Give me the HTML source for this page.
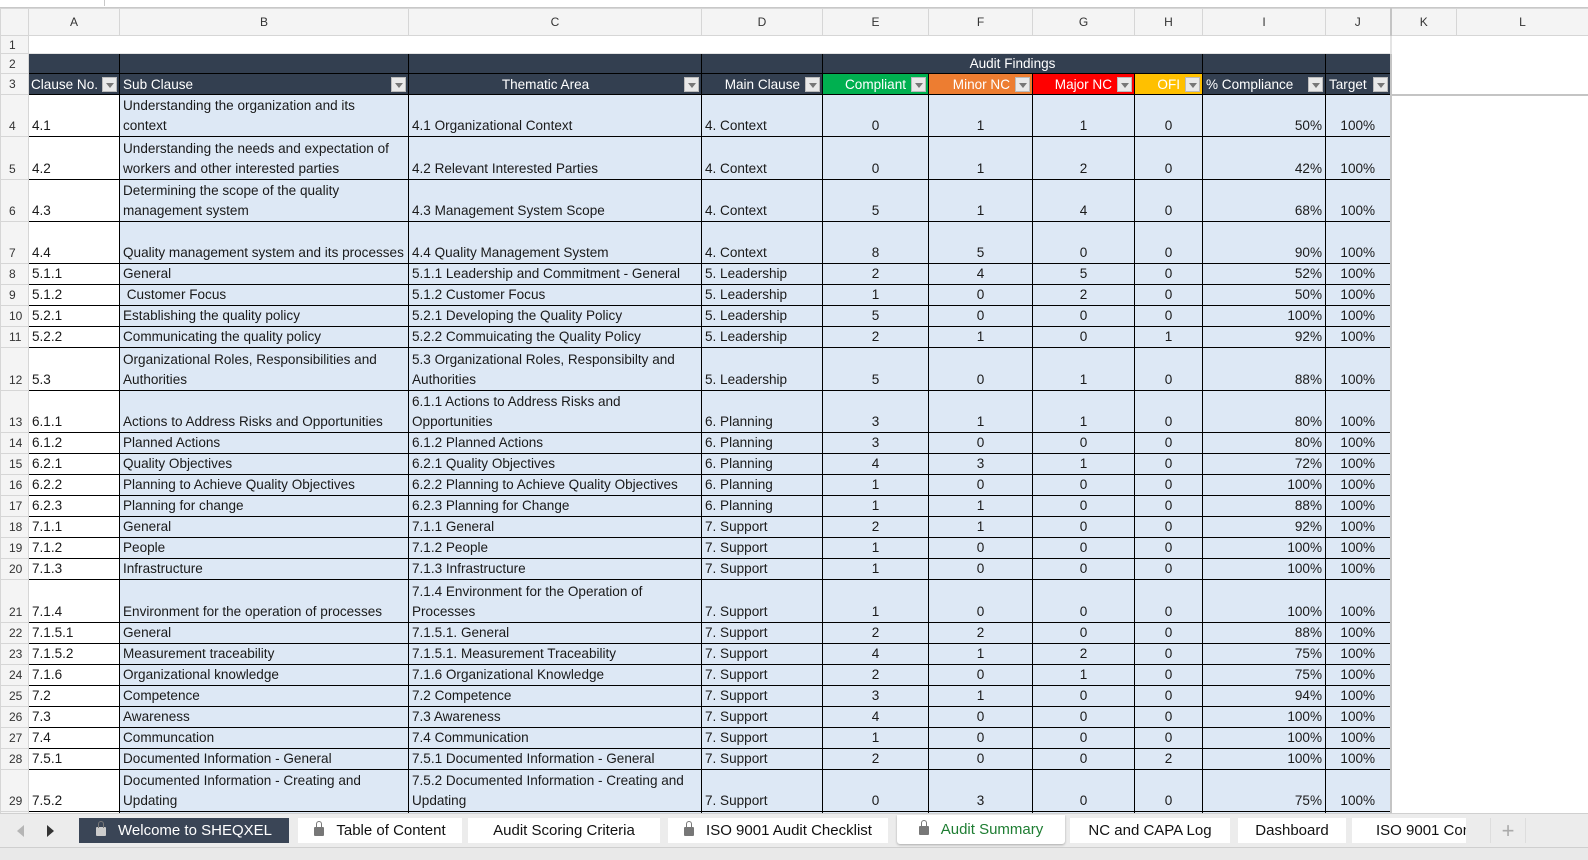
<!DOCTYPE html>
<html><head><meta charset="utf-8">
<style>
*{margin:0;padding:0;box-sizing:border-box}
body{width:1588px;height:860px;overflow:hidden;background:#fff;font-family:"Liberation Sans",Arial,sans-serif;position:relative}
#top{position:absolute;left:0;top:0;width:1588px;height:8px;background:#fff;border-bottom:1px solid #c8c8c8}
#top div{position:absolute;left:104px;top:0;width:1px;height:6px;background:#c8c8c8}
#wrap{position:absolute;left:0;top:8px;width:1588px;height:805px;overflow:hidden}
table{border-collapse:collapse;table-layout:fixed;width:1588px;font-size:13.55px;color:#1a1a1a}
td{border:1px solid #000;padding:0 3px;vertical-align:bottom;line-height:20px;white-space:nowrap;overflow:hidden;height:21.05px}
tr.d td{height:42.3px;white-space:normal}
td.n{background:#f4f4f4;border:1px solid #d6d6d6;text-align:left;padding-left:8px;color:#333;font-size:12px}
tr.h td{background:#f4f4f4;border:1px solid #d6d6d6;text-align:center;vertical-align:middle;color:#333;font-size:12px;height:27px}
td.a{background:#fff}
td.b{background:#dde8f5}
td.c{text-align:center}
td.r{text-align:right}
td.k{border:none;background:#fff}
td.kl{border:none;border-left:2px solid #c4c4c4;background:#fff}
tr.r1 td{height:18px;line-height:16px;border-color:#e4e4e4}
tr.r1 td.n{border-color:#d6d6d6}
.dk{background:#333f50!important;color:#fff}
tr.r2 td{height:20px;line-height:18px}
tr.r3 td{height:21px;line-height:19px;position:relative;color:#fff;font-size:13.55px}
.f{position:absolute;right:2px;top:3px;width:15px;height:15px;background:#e9e9e9;border:1px solid #bbb}
.f:after{content:"";position:absolute;left:3px;top:5px;border-left:4px solid transparent;border-right:4px solid transparent;border-top:5px solid #777}
.fl{padding-right:22px!important}
#tabs{position:absolute;left:0;top:813px;width:1588px;height:35px;background:#ececec;border-top:1px solid #d0d0d0;border-bottom:1px solid #cfcfcf}
#bot{position:absolute;left:0;top:848px;width:1588px;height:12px;background:#e9e9e9}
.t{position:absolute;top:4px;height:25px;background:#fff;font-size:15px;line-height:25px;text-align:center;color:#111}
.lk{display:inline-block;width:10px;height:9px;background:#777;border-radius:1px;position:relative;margin-right:12px;vertical-align:-1px}
.lk:before{content:"";position:absolute;left:2px;top:-6px;width:4px;height:6px;border:1.5px solid #777;border-bottom:none;border-radius:4px 4px 0 0}
.ar{position:absolute;top:11px;width:0;height:0;border-top:6px solid transparent;border-bottom:6px solid transparent}
</style></head><body>
<div id="top"><div></div></div>
<div id="wrap">
<table>
<colgroup><col style="width:28px"><col style="width:91px"><col style="width:289px"><col style="width:293px"><col style="width:121px"><col style="width:106px"><col style="width:104px"><col style="width:102px"><col style="width:68px"><col style="width:123px"><col style="width:65px"><col style="width:66px"><col style="width:132px"></colgroup>
<tr class="h"><td></td><td>A</td><td>B</td><td>C</td><td>D</td><td>E</td><td>F</td><td>G</td><td>H</td><td>I</td><td style="border-right:2px solid #c4c4c4">J</td><td>K</td><td>L</td></tr>
<tr class="r1"><td class="n">1</td><td colspan="10"></td><td class="kl"></td><td class="k"></td></tr>
<tr class="r2"><td class="n">2</td><td class="dk"></td><td class="dk"></td><td class="dk"></td><td class="dk"></td><td class="dk c" colspan="4">Audit Findings</td><td class="dk"></td><td class="dk"></td><td class="kl"></td><td class="k"></td></tr>
<tr class="r3"><td class="n" style="color:#333;font-size:12px">3</td>
<td class="dk fl" style="padding-left:2px">Clause No.<span class="f"></span></td>
<td class="dk fl">Sub Clause<span class="f"></span></td>
<td class="dk fl c">Thematic Area<span class="f"></span></td>
<td class="dk fl r">Main Clause<span class="f"></span></td>
<td class="fl r" style="background:#00b050">Compliant<span class="f"></span></td>
<td class="fl r" style="background:#ed7d31">Minor NC<span class="f"></span></td>
<td class="fl r" style="background:#ff0000">Major NC<span class="f"></span></td>
<td class="fl r" style="background:#ffc000">OFI<span class="f"></span></td>
<td class="dk fl">% Compliance<span class="f"></span></td>
<td class="dk fl">Target<span class="f"></span></td>
<td class="kl" style="border-bottom:2px solid #c4c4c4"></td><td class="k" style="border-bottom:2px solid #c4c4c4"></td></tr>
<tr class="d"><td class="n">4</td><td class="a">4.1</td><td class="b">Understanding the organization and its<br>context</td><td class="b">4.1 Organizational Context</td><td class="b">4. Context</td><td class="b c">0</td><td class="b c">1</td><td class="b c">1</td><td class="b c">0</td><td class="b r">50%</td><td class="b c">100%</td><td class="kl"></td><td class="k"></td></tr>
<tr class="d"><td class="n">5</td><td class="a">4.2</td><td class="b">Understanding the needs and expectation of workers and other interested parties</td><td class="b">4.2 Relevant Interested Parties</td><td class="b">4. Context</td><td class="b c">0</td><td class="b c">1</td><td class="b c">2</td><td class="b c">0</td><td class="b r">42%</td><td class="b c">100%</td><td class="kl"></td><td class="k"></td></tr>
<tr class="d"><td class="n">6</td><td class="a">4.3</td><td class="b">Determining the scope of the quality management system</td><td class="b">4.3 Management System Scope</td><td class="b">4. Context</td><td class="b c">5</td><td class="b c">1</td><td class="b c">4</td><td class="b c">0</td><td class="b r">68%</td><td class="b c">100%</td><td class="kl"></td><td class="k"></td></tr>
<tr class="d"><td class="n">7</td><td class="a">4.4</td><td class="b" style="white-space:nowrap">Quality management system and its processes</td><td class="b">4.4 Quality Management System</td><td class="b">4. Context</td><td class="b c">8</td><td class="b c">5</td><td class="b c">0</td><td class="b c">0</td><td class="b r">90%</td><td class="b c">100%</td><td class="kl"></td><td class="k"></td></tr>
<tr><td class="n">8</td><td class="a">5.1.1</td><td class="b">General</td><td class="b">5.1.1 Leadership and Commitment - General</td><td class="b">5. Leadership</td><td class="b c">2</td><td class="b c">4</td><td class="b c">5</td><td class="b c">0</td><td class="b r">52%</td><td class="b c">100%</td><td class="kl"></td><td class="k"></td></tr>
<tr><td class="n">9</td><td class="a">5.1.2</td><td class="b">&nbsp;Customer Focus</td><td class="b">5.1.2 Customer Focus</td><td class="b">5. Leadership</td><td class="b c">1</td><td class="b c">0</td><td class="b c">2</td><td class="b c">0</td><td class="b r">50%</td><td class="b c">100%</td><td class="kl"></td><td class="k"></td></tr>
<tr><td class="n">10</td><td class="a">5.2.1</td><td class="b">Establishing the quality policy</td><td class="b">5.2.1 Developing the Quality Policy</td><td class="b">5. Leadership</td><td class="b c">5</td><td class="b c">0</td><td class="b c">0</td><td class="b c">0</td><td class="b r">100%</td><td class="b c">100%</td><td class="kl"></td><td class="k"></td></tr>
<tr><td class="n">11</td><td class="a">5.2.2</td><td class="b">Communicating the quality policy</td><td class="b">5.2.2 Commuicating the Quality Policy</td><td class="b">5. Leadership</td><td class="b c">2</td><td class="b c">1</td><td class="b c">0</td><td class="b c">1</td><td class="b r">92%</td><td class="b c">100%</td><td class="kl"></td><td class="k"></td></tr>
<tr class="d"><td class="n">12</td><td class="a">5.3</td><td class="b">Organizational Roles, Responsibilities and Authorities</td><td class="b">5.3 Organizational Roles, Responsibilty and Authorities</td><td class="b">5. Leadership</td><td class="b c">5</td><td class="b c">0</td><td class="b c">1</td><td class="b c">0</td><td class="b r">88%</td><td class="b c">100%</td><td class="kl"></td><td class="k"></td></tr>
<tr class="d"><td class="n">13</td><td class="a">6.1.1</td><td class="b">Actions to Address Risks and Opportunities</td><td class="b">6.1.1 Actions to Address Risks and Opportunities</td><td class="b">6. Planning</td><td class="b c">3</td><td class="b c">1</td><td class="b c">1</td><td class="b c">0</td><td class="b r">80%</td><td class="b c">100%</td><td class="kl"></td><td class="k"></td></tr>
<tr><td class="n">14</td><td class="a">6.1.2</td><td class="b">Planned Actions</td><td class="b">6.1.2 Planned Actions</td><td class="b">6. Planning</td><td class="b c">3</td><td class="b c">0</td><td class="b c">0</td><td class="b c">0</td><td class="b r">80%</td><td class="b c">100%</td><td class="kl"></td><td class="k"></td></tr>
<tr><td class="n">15</td><td class="a">6.2.1</td><td class="b">Quality Objectives</td><td class="b">6.2.1 Quality Objectives</td><td class="b">6. Planning</td><td class="b c">4</td><td class="b c">3</td><td class="b c">1</td><td class="b c">0</td><td class="b r">72%</td><td class="b c">100%</td><td class="kl"></td><td class="k"></td></tr>
<tr><td class="n">16</td><td class="a">6.2.2</td><td class="b">Planning to Achieve Quality Objectives</td><td class="b">6.2.2 Planning to Achieve Quality Objectives</td><td class="b">6. Planning</td><td class="b c">1</td><td class="b c">0</td><td class="b c">0</td><td class="b c">0</td><td class="b r">100%</td><td class="b c">100%</td><td class="kl"></td><td class="k"></td></tr>
<tr><td class="n">17</td><td class="a">6.2.3</td><td class="b">Planning for change</td><td class="b">6.2.3 Planning for Change</td><td class="b">6. Planning</td><td class="b c">1</td><td class="b c">1</td><td class="b c">0</td><td class="b c">0</td><td class="b r">88%</td><td class="b c">100%</td><td class="kl"></td><td class="k"></td></tr>
<tr><td class="n">18</td><td class="a">7.1.1</td><td class="b">General</td><td class="b">7.1.1 General</td><td class="b">7. Support</td><td class="b c">2</td><td class="b c">1</td><td class="b c">0</td><td class="b c">0</td><td class="b r">92%</td><td class="b c">100%</td><td class="kl"></td><td class="k"></td></tr>
<tr><td class="n">19</td><td class="a">7.1.2</td><td class="b">People</td><td class="b">7.1.2 People</td><td class="b">7. Support</td><td class="b c">1</td><td class="b c">0</td><td class="b c">0</td><td class="b c">0</td><td class="b r">100%</td><td class="b c">100%</td><td class="kl"></td><td class="k"></td></tr>
<tr><td class="n">20</td><td class="a">7.1.3</td><td class="b">Infrastructure</td><td class="b">7.1.3 Infrastructure</td><td class="b">7. Support</td><td class="b c">1</td><td class="b c">0</td><td class="b c">0</td><td class="b c">0</td><td class="b r">100%</td><td class="b c">100%</td><td class="kl"></td><td class="k"></td></tr>
<tr class="d"><td class="n">21</td><td class="a">7.1.4</td><td class="b">Environment for the operation of processes</td><td class="b">7.1.4 Environment for the Operation of Processes</td><td class="b">7. Support</td><td class="b c">1</td><td class="b c">0</td><td class="b c">0</td><td class="b c">0</td><td class="b r">100%</td><td class="b c">100%</td><td class="kl"></td><td class="k"></td></tr>
<tr><td class="n">22</td><td class="a">7.1.5.1</td><td class="b">General</td><td class="b">7.1.5.1. General</td><td class="b">7. Support</td><td class="b c">2</td><td class="b c">2</td><td class="b c">0</td><td class="b c">0</td><td class="b r">88%</td><td class="b c">100%</td><td class="kl"></td><td class="k"></td></tr>
<tr><td class="n">23</td><td class="a">7.1.5.2</td><td class="b">Measurement traceability</td><td class="b">7.1.5.1. Measurement Traceability</td><td class="b">7. Support</td><td class="b c">4</td><td class="b c">1</td><td class="b c">2</td><td class="b c">0</td><td class="b r">75%</td><td class="b c">100%</td><td class="kl"></td><td class="k"></td></tr>
<tr><td class="n">24</td><td class="a">7.1.6</td><td class="b">Organizational knowledge</td><td class="b">7.1.6 Organizational Knowledge</td><td class="b">7. Support</td><td class="b c">2</td><td class="b c">0</td><td class="b c">1</td><td class="b c">0</td><td class="b r">75%</td><td class="b c">100%</td><td class="kl"></td><td class="k"></td></tr>
<tr><td class="n">25</td><td class="a">7.2</td><td class="b">Competence</td><td class="b">7.2 Competence</td><td class="b">7. Support</td><td class="b c">3</td><td class="b c">1</td><td class="b c">0</td><td class="b c">0</td><td class="b r">94%</td><td class="b c">100%</td><td class="kl"></td><td class="k"></td></tr>
<tr><td class="n">26</td><td class="a">7.3</td><td class="b">Awareness</td><td class="b">7.3 Awareness</td><td class="b">7. Support</td><td class="b c">4</td><td class="b c">0</td><td class="b c">0</td><td class="b c">0</td><td class="b r">100%</td><td class="b c">100%</td><td class="kl"></td><td class="k"></td></tr>
<tr><td class="n">27</td><td class="a">7.4</td><td class="b">Communcation</td><td class="b">7.4 Communication</td><td class="b">7. Support</td><td class="b c">1</td><td class="b c">0</td><td class="b c">0</td><td class="b c">0</td><td class="b r">100%</td><td class="b c">100%</td><td class="kl"></td><td class="k"></td></tr>
<tr><td class="n">28</td><td class="a">7.5.1</td><td class="b">Documented Information - General</td><td class="b">7.5.1 Documented Information - General</td><td class="b">7. Support</td><td class="b c">2</td><td class="b c">0</td><td class="b c">0</td><td class="b c">2</td><td class="b r">100%</td><td class="b c">100%</td><td class="kl"></td><td class="k"></td></tr>
<tr class="d"><td class="n">29</td><td class="a">7.5.2</td><td class="b">Documented Information - Creating and Updating</td><td class="b">7.5.2 Documented Information - Creating and Updating</td><td class="b">7. Support</td><td class="b c">0</td><td class="b c">3</td><td class="b c">0</td><td class="b c">0</td><td class="b r">75%</td><td class="b c">100%</td><td class="kl"></td><td class="k"></td></tr>
<tr class="d"><td class="n" style="vertical-align:top"></td><td class="a"></td><td class="b" style="vertical-align:top">Documented Information - Control of Documented Information</td><td class="b" style="vertical-align:top">7.5.3 Documented Information - Control of Documented Information</td><td class="b"></td><td class="b"></td><td class="b"></td><td class="b"></td><td class="b"></td><td class="b"></td><td class="b"></td><td class="kl"></td><td class="k"></td></tr>
</table>
</div>
<div id="tabs">
<div class="ar" style="left:17px;border-right:7px solid #b5b5b5"></div>
<div class="ar" style="left:47px;border-left:7px solid #333"></div>
<div class="t" style="left:79px;width:210px;background:#3a4556;color:#fff"><span class="lk" style="background:#ccc"></span>Welcome to SHEQXEL</div>
<div class="t" style="left:298px;width:164px"><span class="lk"></span>Table of Content</div>
<div class="t" style="left:468px;width:192px">Audit Scoring Criteria</div>
<div class="t" style="left:668px;width:220px"><span class="lk"></span>ISO 9001 Audit Checklist</div>
<div class="t" style="left:897px;width:168px;top:1px;height:29px;line-height:29px;color:#1e7d32;box-shadow:0 1px 2px #aaa;border-radius:0 0 3px 3px"><span class="lk"></span>Audit Summary</div>
<div class="t" style="left:1070px;width:160px">NC and CAPA Log</div>
<div class="t" style="left:1238px;width:108px">Dashboard</div>
<div class="t" style="left:1352px;width:114px;overflow:hidden;white-space:nowrap;text-align:left;padding-left:24px">ISO 9001 Comp</div>
<div class="t" style="left:1490px;width:36px;background:#ececec;color:#aaa;font-size:22px;border-left:1px solid #ddd;border-right:1px solid #ddd">+</div>
</div>
<div id="bot"></div>
</body></html>
